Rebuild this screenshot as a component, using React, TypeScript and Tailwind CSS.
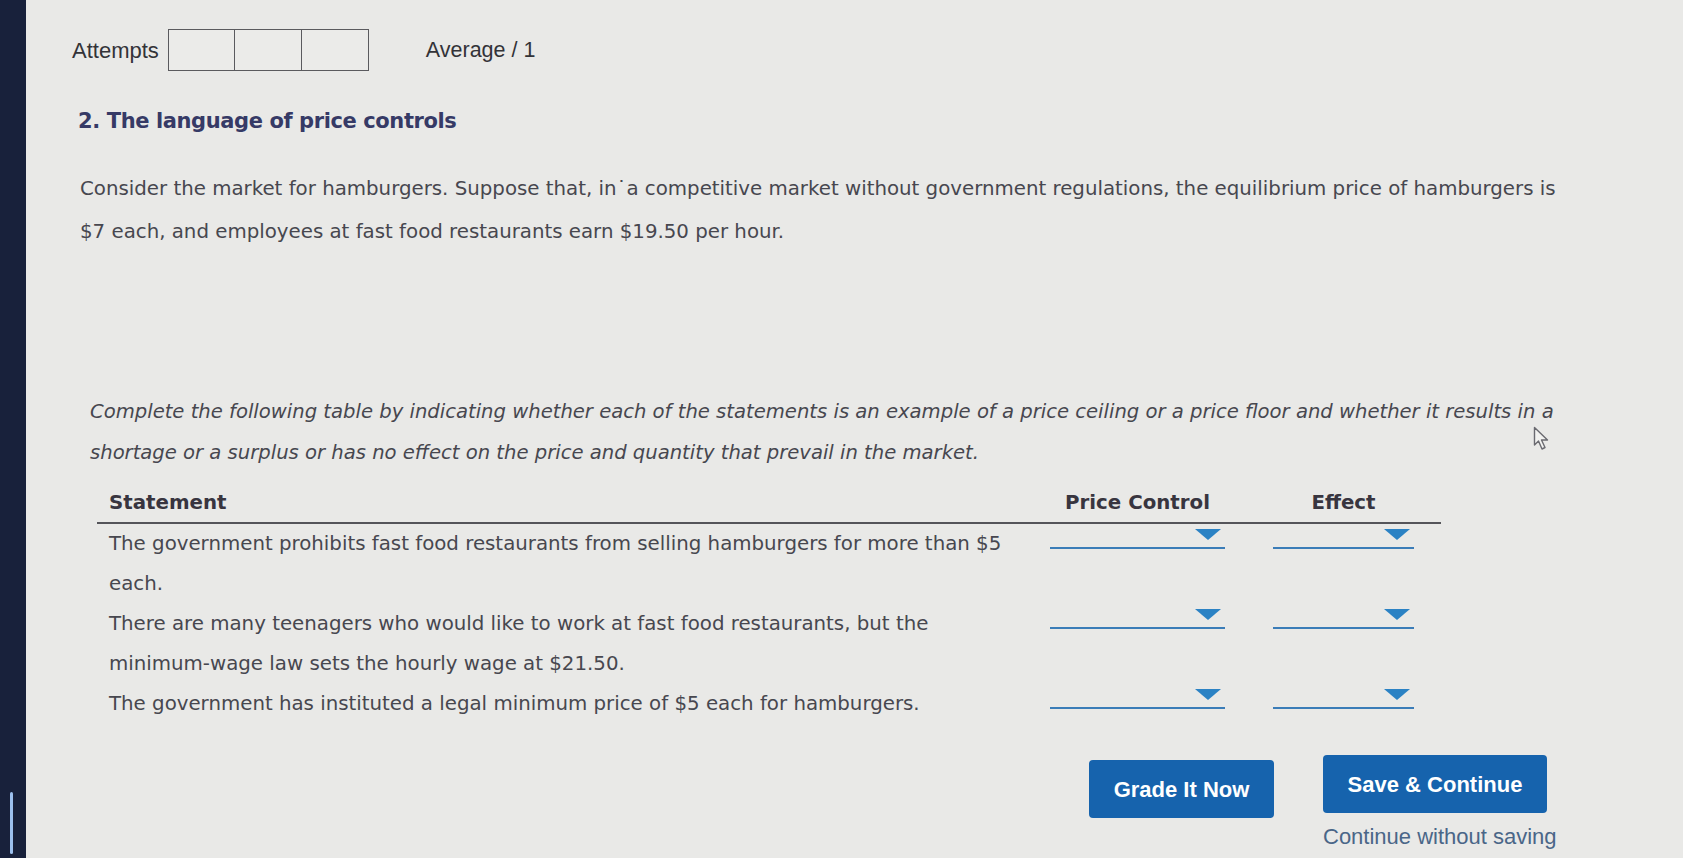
const verdana = { fontFamily: '"DejaVu Sans", Verdana, sans-serif' }

function Dropdown({ w }: { w: string }) {
  return (
    <div className={`relative h-[24px] border-b-2 border-[#3b7db8] ${w}`}>
      <svg className="absolute right-[4px] top-[4px]" width="26" height="11" viewBox="0 0 26 11">
        <polygon points="0,0 26,0 13,11" fill="#2b82c4" />
      </svg>
    </div>
  )
}

export default function App() {
  const rows = [
    {
      text: (
        <>
          The government prohibits fast food restaurants from selling hamburgers for more than $5
          <br />
          each.
        </>
      ),
    },
    {
      text: (
        <>
          There are many teenagers who would like to work at fast food restaurants, but the
          <br />
          minimum-wage law sets the hourly wage at $21.50.
        </>
      ),
    },
    { text: <>The government has instituted a legal minimum price of $5 each for hamburgers.</> },
  ]

  return (
    <div className="relative flex h-[858px] w-full overflow-hidden bg-[#e9e9e7]">
      {/* left edge of the screen */}
      <div className="flex w-[26px] flex-col justify-end bg-[#18213b] pb-[4px]">
        <div className="ml-[10px] h-[62px] w-[3px] rounded bg-[#9cc0ee]" />
      </div>

      <div className="flex-1 pl-[46px] pt-[29px] text-[#47474f]">
        {/* attempts */}
        <div className="flex items-center" style={{ fontFamily: '"Liberation Sans", Arial, sans-serif' }}>
          <span className="text-[22px] text-[#333338]">Attempts</span>
          <div className="ml-[9px] flex h-[42px] border border-[#5a5a5e] bg-[#ebebe9]">
            <div className="w-[66px] border-r border-[#5a5a5e]" />
            <div className="w-[67px] border-r border-[#5a5a5e]" />
            <div className="w-[66px]" />
          </div>
          <span className="ml-[57px] text-[21.5px] text-[#333338]">Average / 1</span>
        </div>

        {/* heading */}
        <h2 className="ml-[6px] mt-[36px] text-[21px] font-bold leading-[28px] tracking-[-0.4px] text-[#363a66]" style={verdana}>
          2. The language of price controls
        </h2>

        {/* intro */}
        <p className="ml-[8px] mt-[32px] text-[19.8px] leading-[43px]" style={verdana}>
          Consider the market for hamburgers. Suppose that, in&#729;a competitive market without government regulations, the equilibrium price of hamburgers is
          <br />
          $7 each, and employees at fast food restaurants earn $19.50 per hour.
        </p>

        {/* instructions */}
        <p className="ml-[18px] mt-[138px] text-[19.6px] italic leading-[41px]" style={verdana}>
          Complete the following table by indicating whether each of the statements is an example of a price ceiling or a price floor and whether it results in a
          <br />
          shortage or a surplus or has no effect on the price and quantity that prevail in the market.
        </p>

        {/* table */}
        <div className="ml-[25px] mt-[15px] w-[1344px]" style={verdana}>
          <div className="grid grid-cols-[953px_175px_48px_141px_27px] border-b-2 border-[#55555a] pb-[4px] text-[19.8px] font-bold leading-[30px] text-[#38353f]">
            <div className="pl-[12px]">Statement</div>
            <div className="text-center">Price Control</div>
            <div />
            <div className="text-center">Effect</div>
            <div />
          </div>
          {rows.map((r, i) => (
            <div key={i} className="grid grid-cols-[953px_175px_48px_141px_27px] text-[19.8px] leading-[40px]">
              <div className="pl-[12px]">{r.text}</div>
              <div className="pt-[1px]">
                <Dropdown w="w-[175px]" />
              </div>
              <div />
              <div className="pt-[1px]">
                <Dropdown w="w-[141px]" />
              </div>
              <div />
            </div>
          ))}
        </div>

        {/* actions */}
        <div className="ml-[1017px] mt-[31px] flex items-start gap-[49px]" style={{ fontFamily: '"Liberation Sans", Arial, sans-serif' }}>
          <button className="mt-[5px] h-[58px] w-[185px] rounded-[4px] bg-[#1663ad] text-[22px] font-bold text-white">
            Grade It Now
          </button>
          <div className="flex flex-col">
            <button className="h-[58px] w-[224px] rounded-[4px] bg-[#1663ad] text-[22px] font-bold text-white">
              Save &amp; Continue
            </button>
            <a className="mt-[12px] text-[22px] leading-[24px] text-[#4a6688]">Continue without saving</a>
          </div>
        </div>
      </div>

      {/* mouse pointer */}
      <svg className="absolute left-[1533px] top-[426px]" width="18" height="25" viewBox="0 0 18 25">
        <path
          d="M1.5 1.5 L1.5 19 L5.5 15 L9 23 L12 21.5 L8.5 14 L14.5 14 Z"
          fill="#f2f2f0"
          stroke="#6a6a70"
          strokeWidth="1.4"
          strokeLinejoin="round"
        />
      </svg>
    </div>
  )
}
